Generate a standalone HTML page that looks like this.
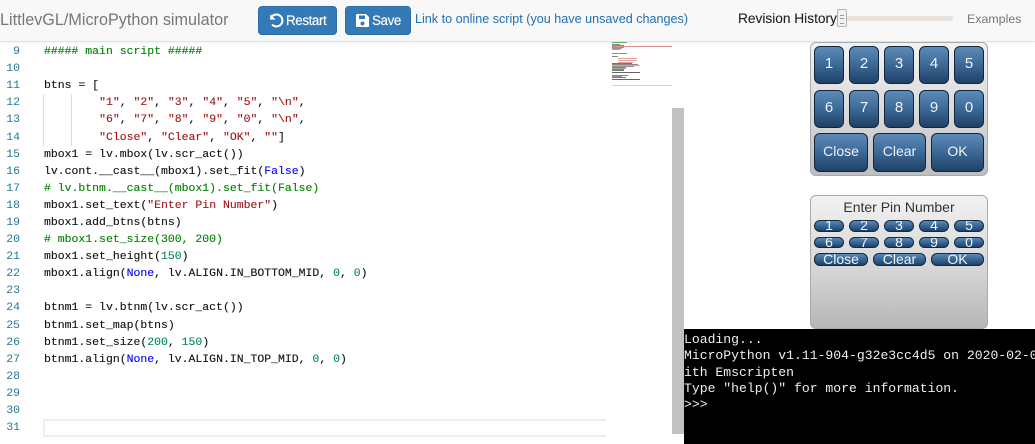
<!DOCTYPE html>
<html><head><meta charset="utf-8">
<style>
html,body{margin:0;padding:0;background:#fff;width:1035px;height:444px;overflow:hidden}
body{position:relative;font-family:"Liberation Sans",sans-serif}
.a{position:absolute}
#hd{left:0;top:0;width:1035px;height:41px;background:#f8f8f8;border-bottom:1px solid #e2e2e2;box-shadow:0 1px 2px rgba(0,0,0,.05)}
.b{position:absolute;top:6px;height:29px;box-sizing:border-box;background:#337ab7;border:1px solid #2e6da4;border-radius:4px;color:#fff;font-size:13.4px;letter-spacing:-.4px;line-height:27px;white-space:nowrap;-webkit-text-stroke:.15px #fff}
.ln{position:absolute;left:0;width:20px;text-align:right;color:#237893;font:11.47px/17.09px "Liberation Mono",monospace}
.c{position:absolute;left:44px;white-space:pre;color:#111;font:11.47px/17.09px "Liberation Mono",monospace;-webkit-text-stroke:.12px}
.s{color:#a31515}.k{color:#0000ff}.n{color:#09885a}.g{color:#008000}
.m{position:absolute;background:linear-gradient(#5d8bb8,#3f6c9a 45%,#1f4066);border:1.5px solid #10263c;border-radius:6px;box-sizing:border-box;color:#eef2f6;text-align:center;font-size:14px;overflow:hidden}
.d{font-size:15px}
.t{position:absolute;background:linear-gradient(#5b8ab8,#3b6996 45%,#1f4168);border:1.5px solid #12283f;border-radius:6px;box-sizing:border-box;color:#f2f5f8;text-align:center;font-size:14px;overflow:hidden}
.p{position:absolute;left:810px;width:178px;box-sizing:border-box;border:1.5px solid #a9a9a9;border-radius:6px}
.v{position:absolute;height:1px}
</style></head><body>
<div class="a" id="hd"></div>
<div class="a" style="left:0;top:9px;font-size:16.2px;line-height:22px;color:#777;white-space:nowrap">LittlevGL/MicroPython simulator</div>
<div class="b" style="left:258px;width:79px;padding-left:27px">Restart
<svg class="a" style="left:10px;top:6px" width="15" height="15" viewBox="0 0 15 15"><path d="M3.2 3.2A6 6 0 1 1 3 11.5" fill="none" stroke="#fff" stroke-width="2"/><path d="M1.2 1.2L1.2 6.6L6.6 6.6Z" fill="#fff"/></svg></div>
<div class="b" style="left:345px;width:66px;padding-left:26px">Save
<svg class="a" style="left:10px;top:7px" width="13" height="13" viewBox="0 0 13 13"><path d="M1 0H10L13 3V12A1 1 0 0 1 12 13H1A1 1 0 0 1 0 12V1A1 1 0 0 1 1 0ZM3 1.5V5H9V1.5ZM6.5 7.5A2 2 0 1 0 6.51 7.5Z" fill="#fff" fill-rule="evenodd"/></svg></div>
<div class="a" style="left:415px;top:10px;font-size:12.6px;line-height:18px;color:#1f6fb5;white-space:nowrap">Link to online script (you have unsaved changes)</div>
<div class="a" style="left:738px;top:10px;font-size:13.7px;line-height:18px;color:#222;white-space:nowrap;-webkit-text-stroke:.1px #222">Revision History</div>
<div class="a" style="left:843px;top:16px;width:110px;height:5px;background:#e8e2dd;border-radius:2px"></div>
<div class="a" style="left:837px;top:9px;width:10px;height:18px;box-sizing:border-box;background:#f2f2f2;border:1px solid #b5b5b5;border-radius:2px"></div>
<div class="a" style="left:840px;top:15px;width:4px;height:7px;border-top:1px solid #999;border-bottom:1px solid #999"></div>
<div class="a" style="left:840px;top:18px;width:4px;height:1px;background:#999"></div>
<div class="a" style="left:967px;top:10px;font-size:12.4px;line-height:18px;color:#777">Examples</div>

<div class="ln" style="top:43px">9</div>
<div class="ln" style="top:60.1px">10</div>
<div class="ln" style="top:77.2px">11</div>
<div class="ln" style="top:94.3px">12</div>
<div class="ln" style="top:111.4px">13</div>
<div class="ln" style="top:128.5px">14</div>
<div class="ln" style="top:145.5px">15</div>
<div class="ln" style="top:162.6px">16</div>
<div class="ln" style="top:179.7px">17</div>
<div class="ln" style="top:196.8px">18</div>
<div class="ln" style="top:213.9px">19</div>
<div class="ln" style="top:231px">20</div>
<div class="ln" style="top:248.1px">21</div>
<div class="ln" style="top:265.2px">22</div>
<div class="ln" style="top:282.3px">23</div>
<div class="ln" style="top:299.4px">24</div>
<div class="ln" style="top:316.5px">25</div>
<div class="ln" style="top:333.5px">26</div>
<div class="ln" style="top:350.6px">27</div>
<div class="ln" style="top:367.7px">28</div>
<div class="ln" style="top:384.8px">29</div>
<div class="ln" style="top:401.9px">30</div>
<div class="ln" style="top:419px">31</div>

<div class="a" style="left:43px;top:94px;width:1px;height:52px;background:#ddd"></div>
<div class="a" style="left:71px;top:94px;width:1px;height:52px;background:#ddd"></div>

<div class="c g" style="top:43px">##### main script #####</div>
<div class="c" style="top:77.2px">btns = [</div>
<div class="c" style="top:94.3px">        <span class="s">"1"</span>, <span class="s">"2"</span>, <span class="s">"3"</span>, <span class="s">"4"</span>, <span class="s">"5"</span>, <span class="s">"\n"</span>,</div>
<div class="c" style="top:111.4px">        <span class="s">"6"</span>, <span class="s">"7"</span>, <span class="s">"8"</span>, <span class="s">"9"</span>, <span class="s">"0"</span>, <span class="s">"\n"</span>,</div>
<div class="c" style="top:128.5px">        <span class="s">"Close"</span>, <span class="s">"Clear"</span>, <span class="s">"OK"</span>, <span class="s">""</span>]</div>
<div class="c" style="top:145.5px">mbox1 = lv.mbox(lv.scr_act())</div>
<div class="c" style="top:162.6px">lv.cont.__cast__(mbox1).set_fit(<span class="k">False</span>)</div>
<div class="c g" style="top:179.7px"># lv.btnm.__cast__(mbox1).set_fit(False)</div>
<div class="c" style="top:196.8px">mbox1.set_text(<span class="s">"Enter Pin Number"</span>)</div>
<div class="c" style="top:213.9px">mbox1.add_btns(btns)</div>
<div class="c g" style="top:231px"># mbox1.set_size(300, 200)</div>
<div class="c" style="top:248.1px">mbox1.set_height(<span class="n">150</span>)</div>
<div class="c" style="top:265.2px">mbox1.align(<span class="k">None</span>, lv.ALIGN.IN_BOTTOM_MID, <span class="n">0</span>, <span class="n">0</span>)</div>
<div class="c" style="top:299.4px">btnm1 = lv.btnm(lv.scr_act())</div>
<div class="c" style="top:316.5px">btnm1.set_map(btns)</div>
<div class="c" style="top:333.5px">btnm1.set_size(<span class="n">200</span>, <span class="n">150</span>)</div>
<div class="c" style="top:350.6px">btnm1.align(<span class="k">None</span>, lv.ALIGN.IN_TOP_MID, <span class="n">0</span>, <span class="n">0</span>)</div>

<div class="a" style="left:43px;top:419px;width:563px;height:18px;box-sizing:border-box;border:2px solid #eee;border-right:0"></div>

<!-- minimap -->
<div class="a" style="left:0;top:0;width:1035px;height:444px;filter:blur(.35px)">
<div class="v" style="left:612px;top:42px;width:15px;background:#5fae5f"></div>
<div class="v" style="left:612px;top:44px;width:8px;background:#8a8a8a"></div>
<div class="v" style="left:612px;top:45px;width:12px;background:#888"></div>
<div class="v" style="left:612px;top:46px;width:60px;background:#dd8d8d"></div>
<div class="v" style="left:612px;top:47px;width:12px;background:#8f8fd8"></div>
<div class="v" style="left:612px;top:48px;width:10px;background:#999"></div>
<div class="v" style="left:612px;top:49px;width:8px;background:#9a9ad8"></div>
<div class="v" style="left:612px;top:53px;width:15px;background:#5fae5f"></div>
<div class="v" style="left:612px;top:56px;width:6px;background:#888"></div>
<div class="v" style="left:618px;top:58px;width:19px;background:#e0a0a0"></div>
<div class="v" style="left:618px;top:60px;width:19px;background:#e0a0a0"></div>
<div class="v" style="left:618px;top:62px;width:15px;background:#e0a0a0"></div>
<div class="v" style="left:612px;top:63px;width:20px;background:#777"></div>
<div class="v" style="left:612px;top:64px;width:26px;background:#8a8a8a"></div>
<div class="v" style="left:612px;top:65px;width:28px;background:#8fc88f"></div>
<div class="v" style="left:612px;top:66px;width:22px;background:#b08a8a"></div>
<div class="v" style="left:612px;top:67px;width:14px;background:#888"></div>
<div class="v" style="left:612px;top:68px;width:14px;background:#7fb87f"></div>
<div class="v" style="left:612px;top:69px;width:12px;background:#888"></div>
<div class="v" style="left:612px;top:70px;width:12px;background:#777"></div>
<div class="v" style="left:612px;top:72px;width:28px;background:#666"></div>
<div class="v" style="left:612px;top:75px;width:16px;background:#888"></div>
<div class="v" style="left:612px;top:76px;width:10px;background:#999"></div>
<div class="v" style="left:612px;top:77px;width:14px;background:#777"></div>
<div class="v" style="left:612px;top:79px;width:28px;background:#666"></div>
<div class="v" style="left:612px;top:85px;width:60px;background:#b9d8f2"></div>
</div>

<div class="a" style="left:672px;top:108px;width:12px;height:326px;background:#c1c1c1"></div>

<!-- keyboard panel -->
<div class="p" style="top:42px;height:134px;background:linear-gradient(#f2f2f2,#dadada 50%,#bebebe)"></div>
<div class="m d" style="left:814px;top:46px;width:30px;height:38px;line-height:34px">1</div>
<div class="m d" style="left:849px;top:46px;width:30px;height:38px;line-height:34px">2</div>
<div class="m d" style="left:884px;top:46px;width:30px;height:38px;line-height:34px">3</div>
<div class="m d" style="left:919px;top:46px;width:30px;height:38px;line-height:34px">4</div>
<div class="m d" style="left:954px;top:46px;width:30px;height:38px;line-height:34px">5</div>
<div class="m d" style="left:814px;top:90px;width:30px;height:38px;line-height:34px">6</div>
<div class="m d" style="left:849px;top:90px;width:30px;height:38px;line-height:34px">7</div>
<div class="m d" style="left:884px;top:90px;width:30px;height:38px;line-height:34px">8</div>
<div class="m d" style="left:919px;top:90px;width:30px;height:38px;line-height:34px">9</div>
<div class="m d" style="left:954px;top:90px;width:30px;height:38px;line-height:34px">0</div>
<div class="m" style="left:814px;top:133px;width:54px;height:39px;line-height:35px">Close</div>
<div class="m" style="left:873px;top:133px;width:53px;height:39px;line-height:35px">Clear</div>
<div class="m" style="left:931px;top:133px;width:53px;height:39px;line-height:35px">OK</div>

<!-- message box -->
<div class="p" style="top:195px;height:134px;background:linear-gradient(#f2f2f2,#d6d6d6 55%,#b6b6b6)"></div>
<div class="a" style="left:810px;top:198px;width:178px;text-align:center;font-size:14px;line-height:18px;color:#333">Enter Pin Number</div>
<div class="t" style="left:814px;top:220px;width:30px;height:12px;line-height:9px">1</div>
<div class="t" style="left:849px;top:220px;width:30px;height:12px;line-height:9px">2</div>
<div class="t" style="left:884px;top:220px;width:30px;height:12px;line-height:9px">3</div>
<div class="t" style="left:919px;top:220px;width:30px;height:12px;line-height:9px">4</div>
<div class="t" style="left:954px;top:220px;width:30px;height:12px;line-height:9px">5</div>
<div class="t" style="left:814px;top:237px;width:30px;height:11px;line-height:8px">6</div>
<div class="t" style="left:849px;top:237px;width:30px;height:11px;line-height:8px">7</div>
<div class="t" style="left:884px;top:237px;width:30px;height:11px;line-height:8px">8</div>
<div class="t" style="left:919px;top:237px;width:30px;height:11px;line-height:8px">9</div>
<div class="t" style="left:954px;top:237px;width:30px;height:11px;line-height:8px">0</div>
<div class="t" style="left:814px;top:253px;width:54px;height:13px;line-height:10px">Close</div>
<div class="t" style="left:873px;top:253px;width:53px;height:13px;line-height:10px">Clear</div>
<div class="t" style="left:931px;top:253px;width:53px;height:13px;line-height:10px">OK</div>

<!-- terminal -->
<div class="a" style="left:684px;top:329px;width:351px;height:112px;padding-top:3px;background:#000;overflow:hidden;color:#eee;font:13.1px/16.25px 'Liberation Mono',monospace;white-space:pre">Loading...
MicroPython v1.11-904-g32e3cc4d5 on 2020-02-08; JS with Emscripten
ith Emscripten
Type "help()" for more information.
&gt;&gt;&gt;</div>
</body></html>
